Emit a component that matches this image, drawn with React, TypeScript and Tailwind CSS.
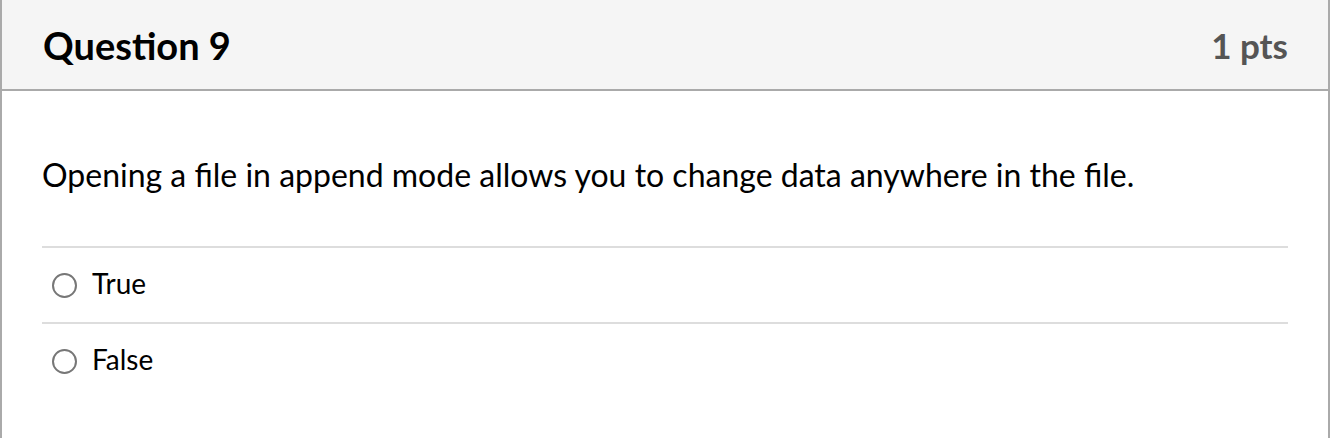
import React from 'react';

const answers = ['True', 'False'];

export default function App() {
  return (
    <div
      className="h-[438px] w-[1330px] overflow-hidden border-x-2 border-[#aaaaaa] bg-white text-[#000]"
      style={{ fontFamily: 'Lato, "Liberation Sans", sans-serif' }}
    >
      {/* En-tête */}
      <div className="flex h-[91px] items-center justify-between border-b-2 border-[#aaaaaa] bg-[#f5f5f5] pl-[41px] pr-[40px]">
        <h2 className="text-[38px] font-bold leading-[44px] text-[#000]">Question 9</h2>
        <span className="text-[35px] font-bold leading-[44px] text-[#555555]">1 pts</span>
      </div>

      {/* Contenu */}
      <div className="px-[40px] pt-[62px]">
        <p className="text-[32px] leading-[44px] text-[#000]">
          Opening a file in append mode allows you to change data anywhere in the file.
        </p>

        <div className="mt-[49px]">
          {answers.map((a) => (
            <div key={a} className="flex h-[76px] items-center border-t-2 border-[#dddddd] pl-[10px]">
              <span className="h-[25px] w-[25px] rounded-full border-2 border-[#777777]" />
              <span className="ml-[15px] pb-[4px] text-[28px] text-[#000]">{a}</span>
            </div>
          ))}
        </div>
      </div>
    </div>
  );
}
